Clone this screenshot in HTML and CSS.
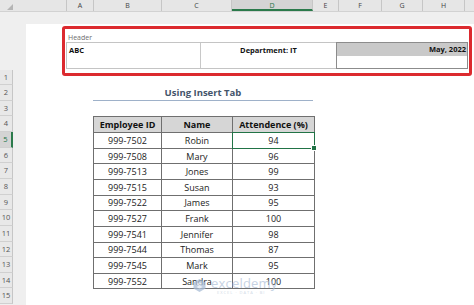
FILE: index.html
```html
<!DOCTYPE html>
<html>
<head>
<meta charset="utf-8">
<link rel="stylesheet" href="styles.css">
</head>
<body>
<div class="sheet">
  <div class="colbar">
    <div class="corner"><span class="tri"></span></div>
    <div class="ch w-a">A</div>
    <div class="ch w-b">B</div>
    <div class="ch w-c">C</div>
    <div class="ch w-d sel">D</div>
    <div class="ch w-e">E</div>
    <div class="ch w-f">F</div>
    <div class="ch w-g">G</div>
    <div class="ch w-h">H</div>
    <div class="ch w-i"></div>
  </div>
  <div class="body">
    <div class="gutter">
      <div class="gutter-top"></div>
      <div class="rh">1</div>
      <div class="rh">2</div>
      <div class="rh">3</div>
      <div class="rh">4</div>
      <div class="rh sel">5</div>
      <div class="rh">6</div>
      <div class="rh">7</div>
      <div class="rh">8</div>
      <div class="rh">9</div>
      <div class="rh">10</div>
      <div class="rh">11</div>
      <div class="rh">12</div>
      <div class="rh">13</div>
      <div class="rh">14</div>
      <div class="rh">15</div>
    </div>
    <div class="page">
      <div class="hdr-zone">
        <div class="hdr-label">Header</div>
        <div class="hdr-box">
          <div class="hsec hleft">ABC</div>
          <div class="hsec hmid">Department: IT</div>
          <div class="hsec hright"><div class="hfill">May, 2022</div></div>
        </div>
      </div>
      <div class="rows">
        <div class="row"></div>
        <div class="row"><div class="title">Using Insert Tab</div></div>
        <div class="row"></div>
        <table class="data">
          <colgroup><col class="c1"><col class="c2"><col class="c3"></colgroup>
          <thead>
            <tr><th>Employee ID</th><th>Name</th><th>Attendence (%)</th></tr>
          </thead>
          <tbody>
            <tr><td>999-7502</td><td>Robin</td><td class="active">94</td></tr>
            <tr><td>999-7508</td><td>Mary</td><td>96</td></tr>
            <tr><td>999-7513</td><td>Jones</td><td>99</td></tr>
            <tr><td>999-7515</td><td>Susan</td><td>93</td></tr>
            <tr><td>999-7522</td><td>James</td><td>95</td></tr>
            <tr><td>999-7527</td><td>Frank</td><td>100</td></tr>
            <tr><td>999-7541</td><td>Jennifer</td><td>98</td></tr>
            <tr><td>999-7544</td><td>Thomas</td><td>87</td></tr>
            <tr><td>999-7545</td><td>Mark</td><td>95</td></tr>
            <tr><td>999-7552</td><td>Sandra</td><td>100</td></tr>
          </tbody>
        </table>
        <div class="row"></div>
      </div>
    </div>
  </div>
  <div class="redbox"></div>
  <div class="watermark">
    <svg class="wm-logo" width="15" height="15" viewBox="0 0 15 15">
      <path d="M7.5 1 L13.5 4.5 L13.5 10.5 L7.5 14 L1.5 10.5 L1.5 4.5 Z" fill="#a9bdd6"/>
      <path d="M4.5 6 L7.5 4.3 L10.5 6 L7.5 7.7 Z M4.5 9 L7.5 7.3 L10.5 9 L7.5 10.7 Z" fill="#e4ebf3"/>
    </svg>
    <div class="wm-text">
      <div class="wm-name">exceldemy</div>
      <div class="wm-tag">EXCEL · DATA · BI</div>
    </div>
  </div>
</div>
</body>
</html>
```

FILE: styles.css
```css
* { box-sizing: border-box; }
html, body { margin: 0; padding: 0; }
body {
  width: 474px;
  height: 305px;
  overflow: hidden;
  background: #efefef;
  font-family: "Open Sans", "Liberation Sans", sans-serif;
}
.sheet {
  position: relative;
  width: 474px;
  height: 305px;
  overflow: hidden;
}
.colbar {
  display: flex;
  height: 12px;
  background: #e6e6e6;
  border-bottom: 1px solid #d2d2d2;
}
.corner {
  width: 67px;
  flex: none;
  position: relative;
  border-right: 1px solid #c6c6c6;
}
.tri {
  position: absolute;
  left: 7px;
  top: 4px;
  width: 0;
  height: 0;
  border-left: 6px solid transparent;
  border-bottom: 6px solid #b5b5b5;
}
.ch {
  flex: none;
  border-right: 1px solid #c6c6c6;
  font-size: 7px;
  line-height: 11px;
  text-align: center;
  color: #444;
}
.ch.sel {
  background: #d4d4d4;
  border-bottom: 2px solid #2b7a4b;
  color: #217346;
}
.w-a { width: 27px; }
.w-b { width: 68px; }
.w-c { width: 70px; }
.w-d { width: 81px; }
.w-e { width: 26px; }
.w-f { width: 43px; }
.w-g { width: 41px; }
.w-h { width: 42px; }
.w-i { width: 20px; border-right: none; }

.body {
  display: flex;
}
.gutter {
  width: 26px;
  flex: none;
  background: #efefef;
}
.gutter-top { height: 57.5px; }
.rh {
  width: 13px;
  height: 15.65px;
  background: #e8e8e8;
  border-bottom: 1px solid #d0d0d0;
  border-right: 1px solid #c6c6c6;
  font-size: 7.5px;
  line-height: 15px;
  text-align: center;
  color: #555;
}
.rh.sel {
  background: #d4d4d4;
  border-right: 2px solid #2b7a4b;
  color: #217346;
}
.page {
  flex: 1;
  margin-top: 12px;
  background: #fff;
  height: 290px;
}
.hdr-zone {
  height: 45.5px;
  padding: 10px 0 0 40px;
}
.hdr-label {
  font-size: 7px;
  line-height: 8px;
  color: #6e6e6e;
  padding-left: 2px;
}
.hdr-box {
  display: flex;
  width: 402px;
  height: 27px;
  border: 1px solid #c4c4c4;
}
.hsec {
  font-size: 7.5px;
  font-weight: 700;
  color: #111;
  line-height: 9px;
  padding-top: 3px;
}
.hleft {
  width: 134px;
  padding-left: 2px;
  border-right: 1px solid #c8c8c8;
}
.hmid {
  width: 135px;
  text-align: center;
}
.hright {
  flex: 1;
  padding-top: 0;
  border: 1px solid #8c8c8c;
  margin: -1px -1px -1px 0;
}
.hfill {
  height: 13px;
  background: #c9c9c9;
  text-align: right;
  line-height: 13px;
  padding-right: 1px;
}
.rows {
  display: flex;
  flex-direction: column;
}
.row { height: 15.65px; flex: none; }
.title {
  margin-left: 67px;
  width: 220px;
  height: 100%;
  border-bottom: 1px solid #9eb1c9;
  text-align: center;
  font-size: 9.5px;
  font-weight: 700;
  color: #44546a;
  line-height: 15px;
}
.data {
  margin-left: 67px;
  border-collapse: collapse;
  table-layout: fixed;
  width: 221px;
  font-size: 9px;
  color: #222;
}
.c1 { width: 68px; }
.c2 { width: 71px; }
.c3 { width: 82px; }
.data tr { height: 15.65px; }
.data th, .data td {
  border: 1px solid #6f6f6f;
  padding: 0;
  text-align: center;
  line-height: 13px;
  white-space: nowrap;
}
.data th {
  background: #d6d6d6;
  font-weight: 700;
  color: #111;
}
.data td.active {
  position: relative;
}
.data td.active::after {
  content: "";
  position: absolute;
  left: -1px;
  top: -1px;
  right: -1px;
  bottom: -1px;
  border: 1.5px solid #217346;
}
.data td.active::before {
  content: "";
  position: absolute;
  right: -3px;
  bottom: -3px;
  width: 4px;
  height: 4px;
  background: #217346;
  border: 1px solid #fff;
  z-index: 1;
}
.redbox {
  position: absolute;
  left: 62px;
  top: 26px;
  width: 410px;
  height: 50px;
  border: 3px solid #dc2a2f;
  border-radius: 3px;
}
.watermark {
  position: absolute;
  left: 192px;
  top: 277px;
  display: flex;
  align-items: flex-start;
  gap: 4px;
  opacity: 0.75;
}
.wm-logo { margin-top: 1px; }
.wm-text { display: flex; flex-direction: column; }
.wm-name {
  font-size: 13px;
  line-height: 13px;
  color: #b3c4da;
  letter-spacing: 0.2px;
}
.wm-tag {
  font-size: 4px;
  line-height: 5px;
  color: #c3cfde;
  letter-spacing: 1px;
  padding-left: 6px;
}
```
